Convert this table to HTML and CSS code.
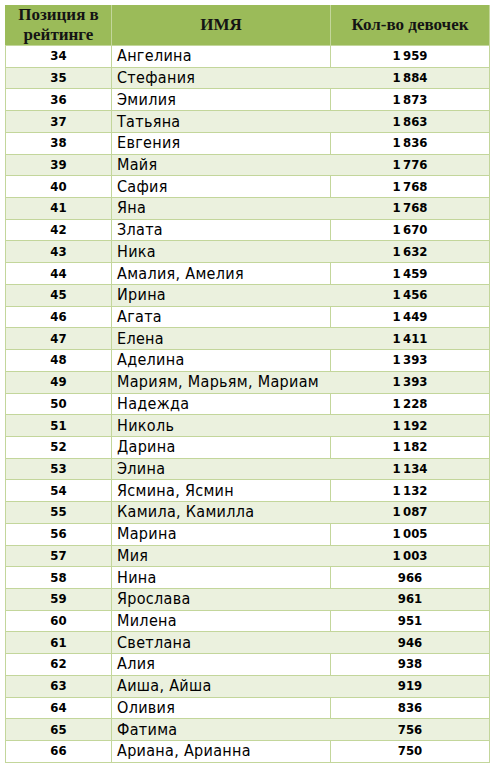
FILE: index.html
```html
<!DOCTYPE html>
<html lang="ru">
<head>
<meta charset="utf-8">
<link rel="stylesheet" href="styles.css">
</head>
<body>
<table class="rating">
  <colgroup>
    <col class="c-pos"><col class="c-name"><col class="c-count">
  </colgroup>
  <thead>
    <tr><th>Позиция в рейтинге</th><th>ИМЯ</th><th>Кол-во девочек</th></tr>
  </thead>
  <tbody>
    <tr><td>34</td><td>Ангелина</td><td>1&thinsp;959</td></tr>
    <tr class="alt"><td>35</td><td>Стефания</td><td>1&thinsp;884</td></tr>
    <tr><td>36</td><td>Эмилия</td><td>1&thinsp;873</td></tr>
    <tr class="alt"><td>37</td><td>Татьяна</td><td>1&thinsp;863</td></tr>
    <tr><td>38</td><td>Евгения</td><td>1&thinsp;836</td></tr>
    <tr class="alt"><td>39</td><td>Майя</td><td>1&thinsp;776</td></tr>
    <tr><td>40</td><td>Сафия</td><td>1&thinsp;768</td></tr>
    <tr class="alt"><td>41</td><td>Яна</td><td>1&thinsp;768</td></tr>
    <tr><td>42</td><td>Злата</td><td>1&thinsp;670</td></tr>
    <tr class="alt"><td>43</td><td>Ника</td><td>1&thinsp;632</td></tr>
    <tr><td>44</td><td>Амалия, Амелия</td><td>1&thinsp;459</td></tr>
    <tr class="alt"><td>45</td><td>Ирина</td><td>1&thinsp;456</td></tr>
    <tr><td>46</td><td>Агата</td><td>1&thinsp;449</td></tr>
    <tr class="alt"><td>47</td><td>Елена</td><td>1&thinsp;411</td></tr>
    <tr><td>48</td><td>Аделина</td><td>1&thinsp;393</td></tr>
    <tr class="alt"><td>49</td><td>Мариям, Марьям, Мариам</td><td>1&thinsp;393</td></tr>
    <tr><td>50</td><td>Надежда</td><td>1&thinsp;228</td></tr>
    <tr class="alt"><td>51</td><td>Николь</td><td>1&thinsp;192</td></tr>
    <tr><td>52</td><td>Дарина</td><td>1&thinsp;182</td></tr>
    <tr class="alt"><td>53</td><td>Элина</td><td>1&thinsp;134</td></tr>
    <tr><td>54</td><td>Ясмина, Ясмин</td><td>1&thinsp;132</td></tr>
    <tr class="alt"><td>55</td><td>Камила, Камилла</td><td>1&thinsp;087</td></tr>
    <tr><td>56</td><td>Марина</td><td>1&thinsp;005</td></tr>
    <tr class="alt"><td>57</td><td>Мия</td><td>1&thinsp;003</td></tr>
    <tr><td>58</td><td>Нина</td><td>966</td></tr>
    <tr class="alt"><td>59</td><td>Ярослава</td><td>961</td></tr>
    <tr><td>60</td><td>Милена</td><td>951</td></tr>
    <tr class="alt"><td>61</td><td>Светлана</td><td>946</td></tr>
    <tr><td>62</td><td>Алия</td><td>938</td></tr>
    <tr class="alt"><td>63</td><td>Аиша, Айша</td><td>919</td></tr>
    <tr><td>64</td><td>Оливия</td><td>836</td></tr>
    <tr class="alt"><td>65</td><td>Фатима</td><td>756</td></tr>
    <tr><td>66</td><td>Ариана, Арианна</td><td>750</td></tr>
  </tbody>
</table>
</body>
</html>
```

FILE: styles.css
```css
html, body {
  margin: 0;
  padding: 0;
  background: #ffffff;
}
body {
  padding: 5px 5px 0 5px;
}
.rating {
  border-collapse: collapse;
  width: 484px;
  table-layout: fixed;
  font-family: "DejaVu Sans Condensed", "DejaVu Sans", Verdana, sans-serif;
  color: #000;
}
.c-pos { width: 106px; }
.c-name { width: 219px; }
.c-count { width: 159px; }
.rating th {
  background: #9bbb59;
  font-family: "Liberation Serif", "Times New Roman", serif;
  font-weight: bold;
  font-size: 17px;
  line-height: 19.5px;
  color: #141414;
  height: 40px;
  padding: 0 4px 1px;
  text-align: center;
  border: 1px solid #c3d69b;
  border-top: none;
  border-left: none;
  box-sizing: border-box;
}
.rating th:first-child { border-left: 1px solid #9bbb59; }
.rating td {
  height: 21.73px;
  padding: 0 6px;
  border: 1px solid #c3d69b;
  box-sizing: border-box;
  font-size: 16px;
  line-height: 18px;
  letter-spacing: 0.3px;
  white-space: nowrap;
}
.rating td:first-child,
.rating td:last-child {
  text-align: center;
  font-weight: bold;
  font-size: 13px;
  letter-spacing: 0;
}
.rating td:nth-child(2) {
  padding-left: 5px;
}
.rating tr.alt td { background: #ebf1de; }
.rating tr.alt td:nth-child(2) { border-right-color: #ebf1de; }
.rating tr.alt td:last-child { border-left-color: #ebf1de; }
```
